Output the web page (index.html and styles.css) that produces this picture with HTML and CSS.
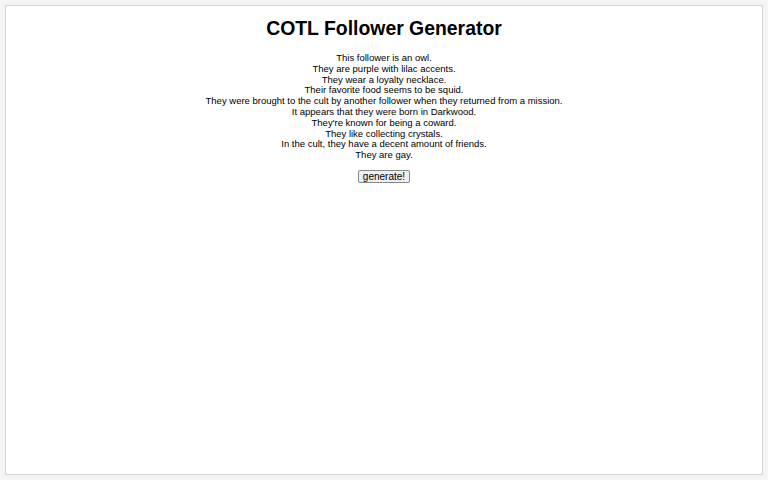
FILE: index.html
```html
<!DOCTYPE html>
<html lang="en">
<head>
  <meta charset="UTF-8" />
  <title>COTL Follower Generator</title>
  <link rel="stylesheet" href="styles.css">
</head>
<body>

  <div class="page">
    <h1>COTL Follower Generator</h1>

    <!-- follower description, one sentence per line -->
    <div id="follower" class="follower">
      <p>This follower is an owl.</p>
      <p>They are purple with lilac accents.</p>
      <p>They wear a loyalty necklace.</p>
      <p>Their favorite food seems to be squid.</p>
      <p>They were brought to the cult by another follower when they returned from a mission.</p>
      <p>It appears that they were born in Darkwood.</p>
      <p>They're known for being a coward.</p>
      <p>They like collecting crystals.</p>
      <p>In the cult, they have a decent amount of friends.</p>
      <p>They are gay.</p>
    </div>

    <button class="gen-btn">generate!</button>
  </div>

</body>
</html>
```

FILE: styles.css
```css
* {
  box-sizing: border-box;
}

html, body {
  height: 100%;
  margin: 0;
}

body {
  background: #f4f4f4;
  padding: 5px;
  font-family: "Liberation Sans", Arial, sans-serif;
  color: #000;
}

.page {
  height: 100%;
  background: #fff;
  border: 1px solid #d6d6d6;
  text-align: center;
  padding-top: 11px;
}

h1 {
  font-size: 19.4px;
  font-weight: bold;
  margin: 0 0 13px;
}

.follower p {
  margin: 0;
  font-size: 9.5px;
  line-height: 10.8px;
}

.gen-btn {
  margin-top: 9px;
  font-family: "Liberation Sans", Arial, sans-serif;
  font-size: 10px;
  padding: 0 4px;
  background: #efefef;
  border: 1px solid #888;
  border-radius: 2px;
  color: #000;
}
```
